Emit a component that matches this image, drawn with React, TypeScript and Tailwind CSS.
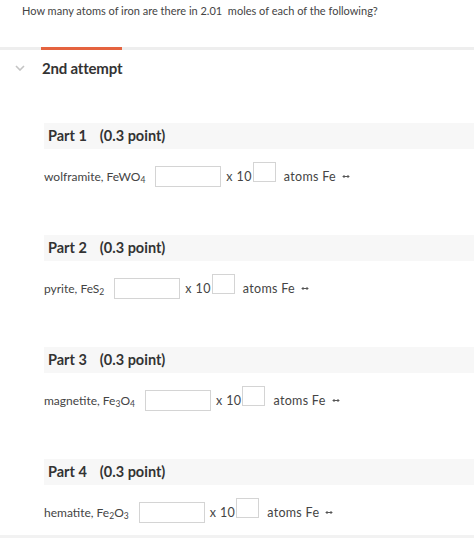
const parts = [
  { n: 1, label: 'wolframite, Fe', formula: ['WO', '4', ''], },
  { n: 2, label: 'pyrite, Fe', formula: ['S', '2', ''] },
  { n: 3, label: 'magnetite, Fe', formula: ['', '3', 'O', '4'] },
  { n: 4, label: 'hematite, Fe', formula: ['', '2', 'O', '3'] },
]

function Formula({ label, formula }: { label: string; formula: string[] }) {
  return (
    <span>
      {label}
      {formula.map((f, i) =>
        i % 2 === 1 ? (
          <span key={i} className="text-[8.5px] align-[-2px]">
            {f}
          </span>
        ) : (
          <span key={i}>{f}</span>
        )
      )}
    </span>
  )
}

function Arrow() {
  return (
    <svg width="8" height="5" viewBox="0 0 8 5" className="text-[#555]">
      <path d="M1 2.5h6M2.5 1 1 2.5 2.5 4M5.5 1 7 2.5 5.5 4" stroke="currentColor" strokeWidth="1" fill="none" />
    </svg>
  )
}

function Part({ n, label, formula }: { n: number; label: string; formula: string[] }) {
  return (
    <div className="pl-[44px]">
      <div className="h-[26px] bg-[#f7f7f7] pl-[4px] flex items-center text-[14.5px] font-bold text-[#333]">
        <span>Part {n}</span>
        <span className="ml-[13px]">(0.3 point)</span>
      </div>
      <div className="flex items-start mt-[13px] text-[#444]">
        <div className="mt-[4px] h-[21px] leading-[21px] text-[12px]">
          <Formula label={label} formula={formula} />
        </div>
        <div className="mt-[4px] ml-[10px] h-[21px] w-[66px] border border-[#d4d4d4] bg-white" />
        <div className="mt-[4px] ml-[5px] h-[21px] leading-[21px] text-[12.5px] tracking-[0.4px]">x 10</div>
        <div className="ml-[1px] h-[20px] w-[23px] border border-[#d4d4d4] bg-white" />
        <div className="mt-[4px] ml-[8px] h-[21px] leading-[21px] text-[12.5px] tracking-[0.3px]">atoms Fe</div>
        <div className="mt-[4px] ml-[6px] h-[21px] flex items-center">
          <Arrow />
        </div>
      </div>
    </div>
  )
}

export default function App() {
  return (
    <div className="w-[474px] h-[538px] bg-white overflow-hidden font-['Lato','Open_Sans',sans-serif] flex flex-col">
      <p className="pt-[4px] pl-[22px] text-[11px] leading-[14px] text-[#444]">
        How many atoms of iron are there in 2.01&nbsp; moles of each of the following?
      </p>
      <div className="mt-[29px] h-[3px] bg-[#eeeeee]">
        <div className="ml-[41px] w-[81px] h-full bg-[#e5633f]" />
      </div>
      <div className="flex items-center mt-[8px] h-[20px]">
        <svg width="10" height="6" viewBox="0 0 10 6" className="ml-[15px]">
          <path d="M1 1l4 4 4-4" stroke="#c4c4c4" strokeWidth="1.6" fill="none" />
        </svg>
        <span className="ml-[17px] text-[15px] font-bold text-[#333] tracking-[-0.2px]">2nd attempt</span>
      </div>
      <div className="mt-[45px] flex flex-col gap-[48px]">
        {parts.map(p => (
          <Part key={p.n} {...p} />
        ))}
      </div>
      <div className="mt-auto h-[3px] bg-[#f2f2f2]" />
    </div>
  )
}
